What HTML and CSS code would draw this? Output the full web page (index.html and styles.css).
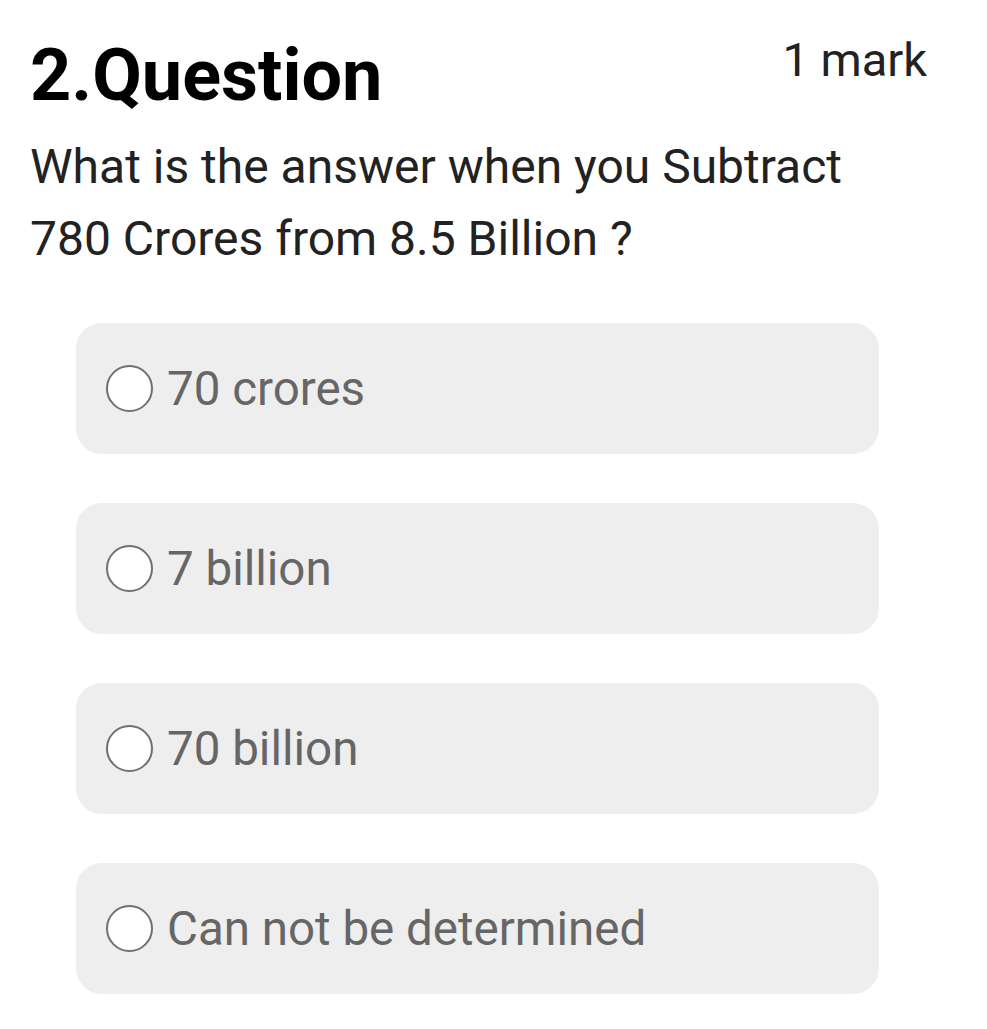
FILE: index.html
```html
<!DOCTYPE html>
<html lang="en">
<head>
    <meta charset="UTF-8">
    <meta name="viewport" content="width=device-width, initial-scale=1.0">
    <title>Question 2</title>
    <link rel="stylesheet" href="styles.css">
</head>
<body>
    <main class="question">
        <div class="question-head">
            <h1>2.Question</h1>
            <span class="marks">1 mark</span>
        </div>
        <p class="question-text">What is the answer when you Subtract 780 Crores from 8.5 Billion ?</p>
        <div class="options">
            <label class="option"><span class="radio"></span>70 crores</label>
            <label class="option"><span class="radio"></span>7 billion</label>
            <label class="option"><span class="radio"></span>70 billion</label>
            <label class="option"><span class="radio"></span>Can not be determined</label>
        </div>
    </main>
</body>
</html>
```

FILE: styles.css
```css
body {
    font-family: 'Roboto', 'Liberation Sans', sans-serif;
    margin: 0;
    padding: 0;
    background: #fff;
    color: #222;
}

.question {
    padding: 30px 60px 0 30px;
}

.question-head {
    display: flex;
    justify-content: space-between;
    align-items: flex-start;
}

h1 {
    margin: 0;
    font-size: 72px;
    font-weight: bold;
    line-height: 92px;
    color: #000;
}

.marks {
    font-size: 47px;
    line-height: 60px;
    color: #222;
}

.question-text {
    margin: 9px 0 0;
    width: 830px;
    font-size: 48px;
    line-height: 72px;
    color: #222;
}

.options {
    display: flex;
    flex-direction: column;
    gap: 49px;
    margin: 48px 0 0 46px;
    width: 803px;
}

.option {
    display: flex;
    align-items: center;
    height: 131px;
    padding-left: 30px;
    background: #eeeeee;
    border-radius: 26px;
    font-size: 47.5px;
    color: #666;
    cursor: pointer;
}

.radio {
    width: 43px;
    height: 43px;
    border: 2px solid #707070;
    border-radius: 50%;
    background: #fff;
    margin-right: 14px;
    flex-shrink: 0;
}
```
